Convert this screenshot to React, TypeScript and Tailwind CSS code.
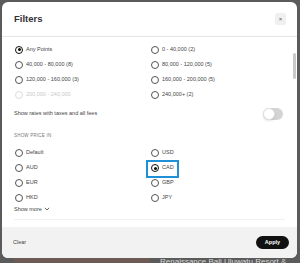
import React from "react";

const font = { fontFamily: '"Liberation Sans", Arial, sans-serif' };

function Radio({ checked, disabled, label }: { checked?: boolean; disabled?: boolean; label: string }) {
  return (
    <div className={`flex items-center gap-[3px] h-[15px] ${disabled ? "text-[#c8c8c8]" : "text-[#444]"}`}>
      <span
        className={`flex items-center justify-center w-[8px] h-[8px] rounded-full border ${
          checked ? "border-[#111] border-[1.5px]" : disabled ? "border-[#dcdcdc]" : "border-[#555]"
        } bg-white`}
      >
        {checked && <span className="w-[3px] h-[3px] rounded-full bg-[#111]" />}
      </span>
      <span className="text-[5.5px] leading-none">{label}</span>
    </div>
  );
}

export default function App() {
  return (
    <div className="relative w-[300px] h-[263px] overflow-hidden bg-[#5b5b5b]" style={font}>
      {/* background page content */}
      <div className="absolute left-[14px] top-[256px] w-[136px] h-[10px] bg-[#6e5a55]" />
      <div className="absolute left-[160px] top-[258px] text-[8px] leading-none text-[#d9d9d9] whitespace-nowrap">
        Renaissance Bali Uluwatu Resort &amp;
      </div>

      {/* modal */}
      <div className="absolute left-[2px] top-[2px] w-[295px] h-[256px] bg-white rounded-[6px] overflow-hidden flex flex-col">
        {/* header */}
        <div className="flex items-center justify-between h-[35px] pl-[12px] pr-[11px] border-b border-[#e6e6e6]">
          <span className="text-[9.5px] font-semibold text-[#333]">Filters</span>
          <span className="flex items-center justify-center w-[11px] h-[12px] bg-[#f0f0f0] rounded-[2px] text-[6px] text-[#555] leading-none">
            ×
          </span>
        </div>

        {/* body */}
        <div className="relative flex-1 pl-[12px] pr-[12px] pt-[5px]">
          {/* scrollbar thumb */}
          <div className="absolute right-[1px] top-[16px] w-[3px] h-[26px] rounded-full bg-[#c9c9c9]" />

          <div className="grid grid-cols-2 pl-[1px]">
            <Radio checked label="Any Points" />
            <div className="pl-[1px]"><Radio label="0 - 40,000 (2)" /></div>
            <Radio label="40,000 - 80,000 (8)" />
            <div className="pl-[1px]"><Radio label="80,000 - 120,000 (5)" /></div>
            <Radio label="120,000 - 160,000 (3)" />
            <div className="pl-[1px]"><Radio label="160,000 - 200,000 (5)" /></div>
            <Radio disabled label="200,000 - 240,000" />
            <div className="pl-[1px]"><Radio label="240,000+ (2)" /></div>
          </div>

          <div className="flex items-center justify-between mt-[4px] h-[15px]">
            <span className="text-[5.5px] text-[#444] leading-none">Show rates with taxes and all fees</span>
            <span className="relative w-[20px] h-[12px] rounded-full bg-[#d4d4d4] mr-[2px]">
              <span className="absolute left-0 top-0 w-[12px] h-[12px] rounded-full bg-white border border-[#e2e2e2] shadow-sm" />
            </span>
          </div>

          <div className="mt-[13px] text-[4.5px] tracking-[0.2px] text-[#777] leading-none">SHOW PRICE IN</div>

          <div className="grid grid-cols-2 mt-[7px] pl-[1px]">
            <Radio label="Default" />
            <div className="pl-[1px]"><Radio label="USD" /></div>
            <Radio label="AUD" />
            <div className="relative pl-[1px]">
              <div className="absolute left-[-4px] top-[-1px] w-[33px] h-[18px] border-2 border-[#1f8fd8]" />
              <Radio checked label="CAD" />
            </div>
            <Radio label="EUR" />
            <div className="pl-[1px]"><Radio label="GBP" /></div>
            <Radio label="HKD" />
            <div className="pl-[1px]"><Radio label="JPY" /></div>
          </div>

          <div className="flex items-center gap-[2px] mt-[1px] text-[5.5px] text-[#444] leading-none">
            <span>Show more</span>
            <svg width="6" height="4" viewBox="0 0 6 4" fill="none">
              <path d="M0.8 0.8 L3 3 L5.2 0.8" stroke="#444" strokeWidth="0.8" />
            </svg>
          </div>

          <div className="mt-[7px] h-px bg-[#f0f0f0]" />
        </div>

        {/* footer */}
        <div className="flex items-center justify-between h-[31px] bg-[#f2f2f2] pl-[11px] pr-[8px]">
          <span className="text-[5.5px] text-[#444] leading-none">Clear</span>
          <span className="flex items-center justify-center w-[33px] h-[13px] rounded-full bg-[#111] text-white text-[5.5px] font-bold leading-none">
            Apply
          </span>
        </div>
      </div>
    </div>
  );
}
